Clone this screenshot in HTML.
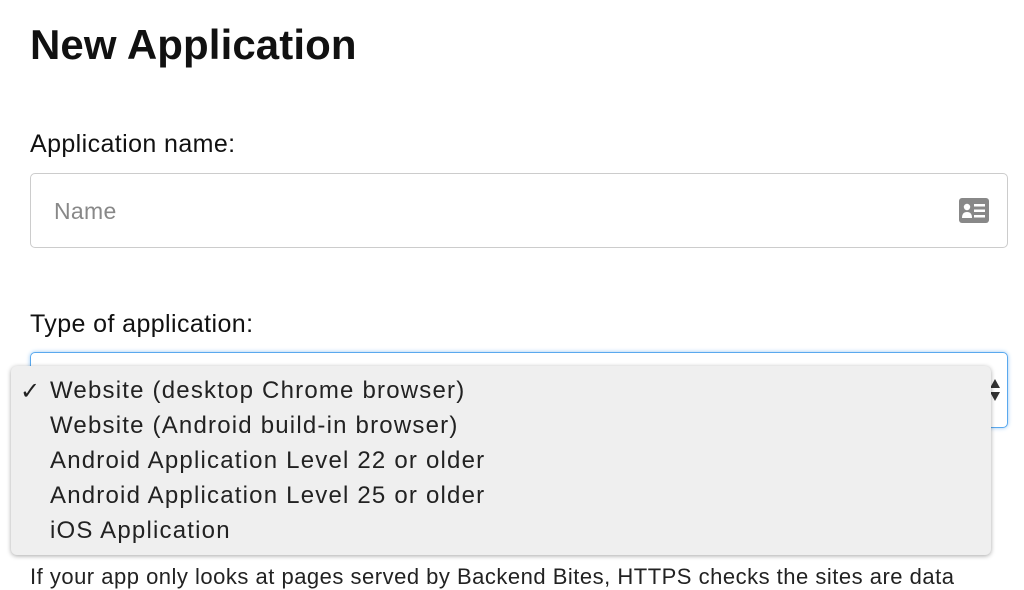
<!DOCTYPE html>
<html><head><style>
body{margin:0;width:1024px;height:568px;overflow:hidden;background:#fff;font-family:"Liberation Sans",sans-serif;color:#111;position:relative}
.a{position:absolute;white-space:nowrap}
</style></head><body>
<div class="a" style="left:30px;top:21px;font-size:42px;font-weight:bold;letter-spacing:0.1px">New Application</div>
<div class="a" style="left:30px;top:130px;font-size:25px;letter-spacing:0.4px">Application name:</div>
<div class="a" style="left:30px;top:173px;width:976px;height:73px;border:1px solid #ccc;border-radius:5px"></div>
<div class="a" style="left:54px;top:198px;font-size:23px;color:#888;letter-spacing:0.3px">Name</div>
<svg class="a" style="left:959px;top:198px" width="30" height="25" viewBox="0 0 30 25"><rect x="0" y="0" width="30" height="25" rx="3" fill="#888"/><circle cx="8" cy="9" r="3.2" fill="#fff"/><path d="M3 20 Q3 14 8 14 Q13 14 13 20 Z" fill="#fff"/><rect x="15" y="6" width="11" height="2.5" fill="#fff"/><rect x="15" y="11.5" width="11" height="2.5" fill="#fff"/><rect x="15" y="17" width="11" height="2.5" fill="#fff"/></svg>
<div class="a" style="left:30px;top:310px;font-size:25px;letter-spacing:0.4px">Type of application:</div>
<div class="a" style="left:30px;top:352px;width:976px;height:74px;border:1px solid #5aa9ee;border-radius:5px;box-shadow:0 0 4px #9cc9f3"></div>
<svg class="a" style="left:989px;top:377px" width="12" height="26"><path d="M6 2 L11 11 L1 11Z M6 24 L11 15 L1 15Z" fill="#333"/></svg>
<div class="a" style="left:30px;top:564px;font-size:22px;color:#222;letter-spacing:0.5px">If your app only looks at pages served by Backend Bites, HTTPS checks the sites are data</div>
<div class="a" style="left:11px;top:366px;width:980px;height:189px;background:#efefef;border-radius:6px;box-shadow:0 1px 5px rgba(0,0,0,.35);font-size:24px;color:#222;letter-spacing:1.2px">
<div class="a" style="left:9px;top:11px">✓</div>
<div class="a" style="left:39px;top:11px">Website (desktop Chrome browser)</div>
<div class="a" style="left:39px;top:46px">Website (Android build-in browser)</div>
<div class="a" style="left:39px;top:81px">Android Application Level 22 or older</div>
<div class="a" style="left:39px;top:116px">Android Application Level 25 or older</div>
<div class="a" style="left:39px;top:151px">iOS Application</div>
</div>
</body></html>
